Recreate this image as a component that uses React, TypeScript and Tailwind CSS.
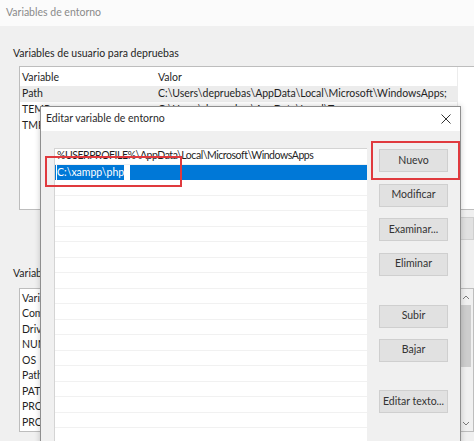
import React from "react"

const userVars = [
  { name: "Path", value: "C:\\Users\\depruebas\\AppData\\Local\\Microsoft\\WindowsApps;" },
  { name: "TEMP", value: "C:\\Users\\depruebas\\AppData\\Local\\Temp" },
  { name: "TMP", value: "C:\\Users\\depruebas\\AppData\\Local\\Temp" },
]

const systemVars = [
  "Variable",
  "ComSpec",
  "DriverData",
  "NUMBER_OF_PROCESSORS",
  "OS",
  "Path",
  "PATHEXT",
  "PROCESSOR_ARCHITECTURE",
  "PROCESSOR_IDENTIFIER",
]

function WinButton({ label, className = "" }: { label?: string; className?: string }) {
  return (
    <div
      className={`flex h-[23px] w-[69px] items-center justify-center border border-[#cfcfcf] bg-[#e1e1e1] text-[#333] ${className}`}
    >
      {label}
    </div>
  )
}

function Chevron({ up }: { up?: boolean }) {
  return (
    <svg width="8" height="5" viewBox="0 0 8 5" className="text-[#7a7a7a]">
      <path d={up ? "M1 4 L4 1 L7 4" : "M1 1 L4 4 L7 1"} fill="none" stroke="currentColor" strokeWidth="1" />
    </svg>
  )
}

// Dialog "Editar variable de entorno" sobre la ventana principal
function EditDialog() {
  const emptyRows = Array.from({ length: 18 })

  return (
    <div className="absolute left-[40px] top-[106px] h-[360px] w-[421px] border border-[#8f8f8f] bg-[#f0f0f0] shadow-[0_0_6px_rgba(0,0,0,0.2)]">
      <div className="flex h-[24px] items-center justify-between bg-white pl-[5px] pr-[9px] text-[#2b2b2b]">
        <span>Editar variable de entorno</span>
        <svg width="10" height="10" viewBox="0 0 10 10" className="text-[#333]">
          <path d="M0.5 0.5 L9.5 9.5 M9.5 0.5 L0.5 9.5" stroke="currentColor" strokeWidth="1" />
        </svg>
      </div>

      <div className="flex pl-[13px] pt-[17px]">
        {/* lista de rutas */}
        <div className="h-[300px] w-[313px] border-l border-t border-[#d4d4d4] bg-white">
          <div className="flex h-[15.5px] items-center border-b border-[#f1f1f1] pl-[2px] tracking-[-0.45px] whitespace-nowrap">
            %USERPROFILE%\AppData\Local\Microsoft\WindowsApps
          </div>
          <div className="flex h-[15.5px] items-stretch bg-[#0078d7]">
            <div className="ml-[1px] flex w-[74px] items-center bg-white pl-[1px]">
              <span className="bg-[#0078d7] leading-[15px] text-white">C:\xampp\php</span>
            </div>
          </div>
          {emptyRows.map((_, i) => (
            <div key={i} className="h-[15.5px] border-b border-[#f1f1f1]" />
          ))}
        </div>

        {/* botones */}
        <div className="ml-[12px] flex flex-col pt-[1px]">
          <WinButton label="Nuevo" />
          <WinButton label="Modificar" className="mt-[11.5px]" />
          <WinButton label="Examinar..." className="mt-[11.5px]" />
          <WinButton label="Eliminar" className="mt-[11.5px]" />
          <WinButton label="Subir" className="mt-[29px]" />
          <WinButton label="Bajar" className="mt-[11px]" />
          <WinButton label="Editar texto..." className="mt-[28.5px]" />
        </div>
      </div>
    </div>
  )
}

export default function App() {
  return (
    <div className="relative h-[441px] w-[474px] overflow-hidden bg-[#f0f0f0] font-['Lato',sans-serif] text-[10.5px] text-[#1f1f1f]">
      {/* Ventana principal */}
      <div className="flex h-[26px] items-center bg-[#fbfbfb] pl-[6px] text-[#8a8a8a]">Variables de entorno</div>

      <div className="pl-[13px]">
        <div className="mt-[19px] h-[17px] leading-[17px]">Variables de usuario para depruebas</div>

        <div className="ml-[6px] mt-[4px] flex h-[144px] w-[460px] border border-[#bdbdbd] bg-white">
          <div className="w-[437px] pt-[3px]">
            <div className="grid h-[16px] grid-cols-[136px_1fr] items-center pl-[2px]">
              <span>Variable</span>
              <span>Valor</span>
            </div>
            {userVars.map((v, i) => (
              <div
                key={v.name}
                className={`grid h-[16px] grid-cols-[136px_1fr] items-center pl-[2px] whitespace-nowrap ${i === 0 ? "bg-[#ececec]" : ""}`}
              >
                <span>{v.name}</span>
                <span>{v.value}</span>
              </div>
            ))}
          </div>
          <div className="flex-1 border-l border-[#ececec]" />
        </div>

        {/* botones de la ventana principal, tapados por el dialogo */}
        <div className="ml-[440px] mt-[7px] flex">
          <WinButton className="w-[75px]" />
        </div>

        <div className="mt-[25px] h-[17px] leading-[17px]">Variables del sistema</div>

        <div className="ml-[6px] mt-[6px] flex h-[144px] w-[455px] border border-[#bdbdbd] bg-white">
          <div className="flex-1 pt-[2px]">
            {systemVars.map((name) => (
              <div key={name} className="flex h-[15.5px] items-center pl-[2px] whitespace-nowrap">
                {name}
              </div>
            ))}
          </div>
          <div className="flex w-[15px] flex-col bg-[#f0f0f0]">
            <div className="flex h-[16px] items-center justify-center">
              <Chevron up />
            </div>
            <div className="mx-[2px] h-[62px] bg-[#cdcdcd]" />
            <div className="flex-1" />
            <div className="flex h-[16px] items-center justify-center">
              <Chevron />
            </div>
          </div>
        </div>
      </div>

      <EditDialog />

      {/* marcas rojas */}
      <div className="absolute left-[45px] top-[156px] h-[31px] w-[137px] border-2 border-[#e03a3e]" />
      <div className="absolute left-[371px] top-[141px] h-[39px] w-[89px] border-2 border-[#e03a3e]" />
    </div>
  )
}
